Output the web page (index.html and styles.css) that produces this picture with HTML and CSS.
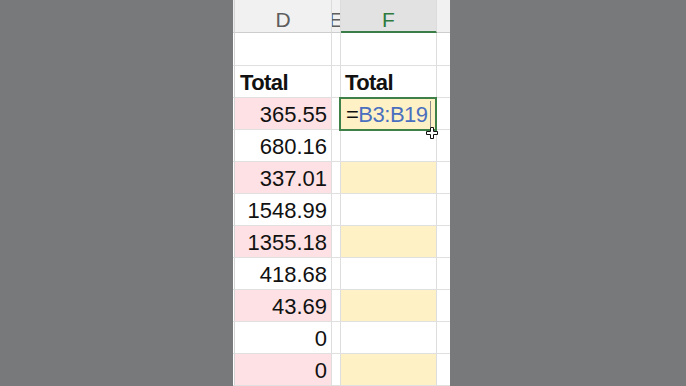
FILE: index.html
```html
<!DOCTYPE html>
<html lang="en">
<head>
<meta charset="utf-8">
<title>Sheet</title>
<link rel="stylesheet" href="styles.css">
</head>
<body>
<div class="stage">
  <div class="sheet">
    <div class="cell hd c"></div>
    <div class="cell hd d"><span>D</span></div>
    <div class="cell hd e"><span>E</span></div>
    <div class="cell hd f active-col"><span>F</span></div>
    <div class="cell hd g"></div>

    <div class="cell c"></div><div class="cell d"></div><div class="cell e"></div><div class="cell f"></div><div class="cell g"></div>

    <div class="cell c"></div><div class="cell d bold">Total</div><div class="cell e"></div><div class="cell f bold">Total</div><div class="cell g"></div>

    <div class="cell c"></div><div class="cell d num pink">365.55</div><div class="cell e"></div>
    <div class="cell f yellow editing"><span class="eq">=</span><span class="ref">B3:B19</span><span class="caret"></span><span class="sel"></span>
      <svg class="handle" width="12" height="12" viewBox="0 0 12 12"><path d="M4.5 0.5h3v4h4v3h-4v4h-3v-4h-4v-3h4z" fill="#fff" stroke="#111" stroke-width="1"/></svg>
    </div>
    <div class="cell g"></div>

    <div class="cell c"></div><div class="cell d num">680.16</div><div class="cell e"></div><div class="cell f"></div><div class="cell g"></div>
    <div class="cell c"></div><div class="cell d num pink">337.01</div><div class="cell e"></div><div class="cell f yellow"></div><div class="cell g"></div>
    <div class="cell c"></div><div class="cell d num">1548.99</div><div class="cell e"></div><div class="cell f"></div><div class="cell g"></div>
    <div class="cell c"></div><div class="cell d num pink">1355.18</div><div class="cell e"></div><div class="cell f yellow"></div><div class="cell g"></div>
    <div class="cell c"></div><div class="cell d num">418.68</div><div class="cell e"></div><div class="cell f"></div><div class="cell g"></div>
    <div class="cell c"></div><div class="cell d num pink">43.69</div><div class="cell e"></div><div class="cell f yellow"></div><div class="cell g"></div>
    <div class="cell c"></div><div class="cell d num">0</div><div class="cell e"></div><div class="cell f"></div><div class="cell g"></div>
    <div class="cell c"></div><div class="cell d num pink">0</div><div class="cell e"></div><div class="cell f yellow"></div><div class="cell g"></div>
  </div>
</div>
</body>
</html>
```
FILE: styles.css
```css
* { box-sizing: border-box; }
html, body { margin: 0; height: 100%; }
body {
  background: #77797b;
  font-family: "Liberation Sans", Arial, sans-serif;
  overflow: hidden;
}
.stage {
  display: flex;
  padding-left: 233px;
  height: 386px;
}
.sheet {
  display: grid;
  grid-template-columns: 2px 97px 9px 96px 13px;
  grid-template-rows: 33px 33px repeat(10, 32px);
  background: #fff;
  height: 386px;
}
.cell {
  border-right: 1px solid #dedede;
  border-bottom: 1px solid #e0e0e0;
  font-size: 22px;
  line-height: 31px;
  padding-top: 1px;
  color: #111;
  white-space: nowrap;
  overflow: hidden;
}
.hd {
  background: #f1f1f1;
  border-bottom: 1px solid #cdcdcd;
  border-right: 1px solid #dcdcdc;
  display: flex;
  justify-content: center;
  align-items: flex-start;
  padding-top: 10px;
  font-size: 21px;
  line-height: 20px;
  color: #5e5e5e;
}
.hd.c { background: #ececec; }
.hd.active-col {
  background: #e2e2e2;
  border-bottom: 2px solid #3a7d47;
  color: #2f7a3f;
}
.c { border-right-color: #d4d4d4; }
.g { border-right: none; }
.bold {
  font-weight: bold;
  letter-spacing: -0.6px;
}
.d.bold { padding-left: 5px; }
.f.bold { padding-left: 4px; }
.num {
  text-align: right;
  padding-right: 4px;
}
.pink { background: #fde1e4; }
.yellow { background: #fff1c6; }
.editing {
  position: relative;
  overflow: visible;
  padding-left: 5px;
  letter-spacing: -0.5px;
}
.eq { color: #111; }
.ref { color: #4a6fbf; }
.caret {
  display: inline-block;
  width: 1px;
  height: 26px;
  margin-left: 2px;
  background: #8a8a8a;
  vertical-align: -5px;
}
.sel {
  position: absolute;
  left: -2px;
  right: -1px;
  top: -1px;
  bottom: -2px;
  border: 2px solid #3f8049;
  pointer-events: none;
}
.handle {
  position: absolute;
  left: 85px;
  top: 29px;
  z-index: 2;
}
```
